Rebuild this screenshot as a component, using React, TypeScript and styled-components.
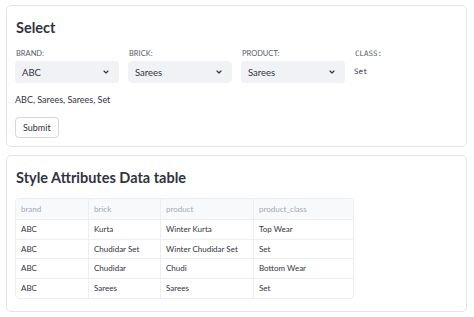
import styled, { createGlobalStyle } from "styled-components";

const GlobalStyle = createGlobalStyle`
    body {
        margin: 0;
        background: #ffffff;
        font-family: Lato, "Noto Sans", sans-serif;
        color: #31333f;
    }
`

const rows = [
    ["ABC", "Kurta", "Winter Kurta", "Top Wear"],
    ["ABC", "Chudidar Set", "Winter Chudidar Set", "Set"],
    ["ABC", "Chudidar", "Chudi", "Bottom Wear"],
    ["ABC", "Sarees", "Sarees", "Set"],
]

const selects = [
    { label: "BRAND:", value: "ABC" },
    { label: "BRICK:", value: "Sarees" },
    { label: "PRODUCT:", value: "Sarees" },
]

function Chevron() {
    return (
        <svg width="8" height="8" viewBox="0 0 24 24" fill="none" stroke="#31333f" strokeWidth="3.5" strokeLinecap="round" strokeLinejoin="round">
            <path d="M6 9l6 6 6-6" />
        </svg>
    )
}

export default function App() {
    return (
        <Page>
            <GlobalStyle />
            <Card>
                <Title>Select</Title>
                <FieldRow>
                    {selects.map((s) => (
                        <Field key={s.label}>
                            <Label>{s.label}</Label>
                            <SelectBox>
                                <span>{s.value}</span>
                                <Chevron />
                            </SelectBox>
                        </Field>
                    ))}
                    <Field>
                        <Label mono>CLASS:</Label>
                        <MonoValue>Set</MonoValue>
                    </Field>
                </FieldRow>
                <Summary>ABC, Sarees, Sarees, Set</Summary>
                <Button>Submit</Button>
            </Card>
            <Card $bottom={12}>
                <Title>Style Attributes Data table</Title>
                <Table>
                    <thead>
                        <tr>
                            <Th w={73}>brand</Th>
                            <Th w={72}>brick</Th>
                            <Th w={93}>product</Th>
                            <Th w={99}>product_class</Th>
                        </tr>
                    </thead>
                    <tbody>
                        {rows.map((r, i) => (
                            <tr key={i}>
                                {r.map((c, j) => (
                                    <Td key={j}>{c}</Td>
                                ))}
                            </tr>
                        ))}
                    </tbody>
                </Table>
            </Card>
        </Page>
    )
}

const Page = styled.div`
    padding: 5px 7px 0 6px;
    display: flex;
    flex-direction: column;
    gap: 8px;
`

const Card = styled.div<{ $bottom?: number }>`
    display: flex;
    flex-direction: column;
    border: 1px solid #e4e5e8;
    border-radius: 5px;
    padding: 11px 8px ${(p) => p.$bottom ?? 8}px 8px;
`

const Title = styled.h1`
    margin: 1px 0 0 1px;
    font-size: 14.5px;
    font-weight: 700;
    line-height: 20px;
    color: #31333f;
`

const FieldRow = styled.div`
    display: grid;
    grid-template-columns: 104px 104px 104px 1fr;
    column-gap: 9px;
    margin-top: 11px;
`

const Field = styled.div`
    display: flex;
    flex-direction: column;
`

const Label = styled.div<{ mono?: boolean }>`
    font-family: ${(p) => (p.mono ? '"DejaVu Sans Mono", "Liberation Mono", monospace' : 'Lato, sans-serif')};
    font-size: 7.5px;
    line-height: 10px;
    color: #555a66;
    margin: 0 0 2px 1px;
`

const SelectBox = styled.div`
    height: 22px;
    background: #f0f2f6;
    border-radius: 4px;
    display: flex;
    align-items: center;
    justify-content: space-between;
    padding: 0 9px 0 7px;
    font-size: 9.5px;
    color: #31333f;
`

const MonoValue = styled.div`
    font-family: "DejaVu Sans Mono", "Liberation Mono", monospace;
    font-size: 7.5px;
    line-height: 22px;
    color: #31333f;
`

const Summary = styled.div`
    font-size: 9px;
    line-height: 12px;
    margin-top: 11px;
`

const Button = styled.button`
    align-self: flex-start;
    margin-top: 11px;
    height: 21px;
    padding: 0 7px;
    background: #ffffff;
    border: 1px solid #d6d7db;
    border-radius: 4px;
    font-family: Lato, sans-serif;
    font-size: 9px;
    color: #31333f;
`

const Table = styled.table`
    align-self: flex-start;
    margin-top: 10px;
    border-collapse: separate;
    border-spacing: 0;
    border: 1px solid #eceef1;
    border-radius: 4px;
    overflow: hidden;
    font-size: 8px;
`

const Th = styled.th<{ w: number }>`
    width: ${(p) => p.w}px;
    height: 21px;
    box-sizing: border-box;
    padding: 0 5px;
    text-align: left;
    font-weight: 400;
    color: #a3a8b4;
    background: #f8f9fb;
    border-right: 1px solid #eceef1;
    border-bottom: 1px solid #eceef1;
    &:last-child {
        border-right: none;
    }
`

const Td = styled.td`
    height: 19.5px;
    box-sizing: border-box;
    padding: 0 5px;
    color: #31333f;
    border-right: 1px solid #eceef1;
    border-bottom: 1px solid #eceef1;
    &:last-child {
        border-right: none;
    }
    tr:last-child & {
        border-bottom: none;
    }
`
